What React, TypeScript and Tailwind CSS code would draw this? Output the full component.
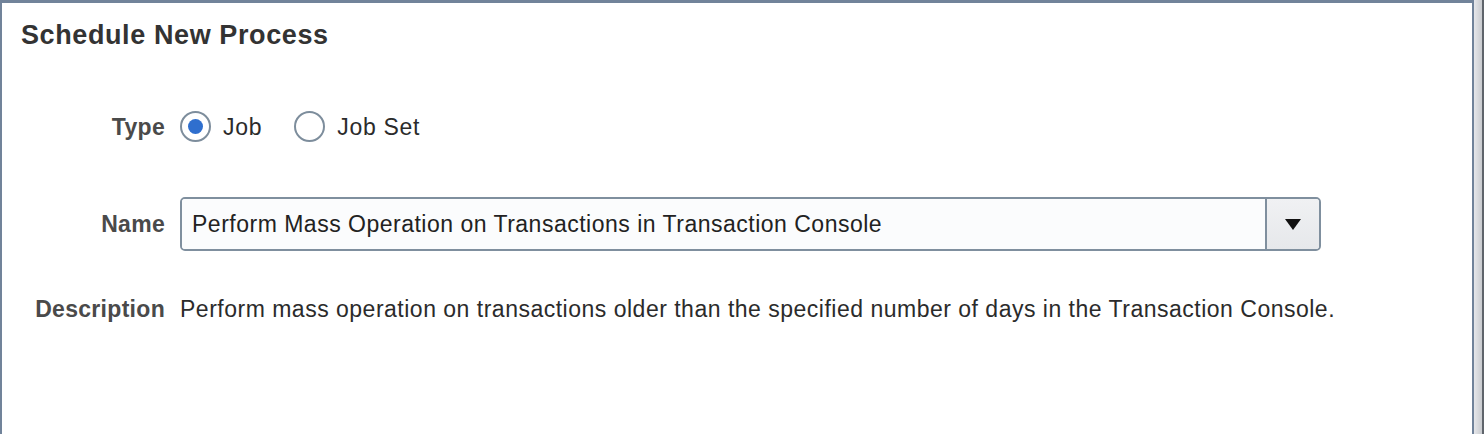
import { useState } from 'react';

const font = { fontFamily: '"Liberation Sans", Arial, sans-serif' };

function Radio({ checked, label, onClick }: { checked: boolean; label: string; onClick: () => void }) {
  return (
    <button type="button" onClick={onClick} className="flex items-center gap-[12px]">
      <span className="flex h-[31px] w-[31px] items-center justify-center rounded-full border-2 border-[#7d8d9c] bg-white">
        {checked && <span className="h-[15px] w-[15px] rounded-full bg-[#2f6fce]" />}
      </span>
      <span className="text-[23px] leading-[26px] tracking-[0.7px] text-[#2b2b2b]">{label}</span>
    </button>
  );
}

export default function App() {
  const [type, setType] = useState<'job' | 'jobset'>('job');

  return (
    <div className="flex h-[434px] w-[1484px] bg-white" style={font}>
      <div className="flex-1 border-x-2 border-t-[3px] border-[#71839a] bg-white">
        <h1 className="pl-[19px] pt-[17px] text-[27px] leading-[30px] font-bold tracking-[0.6px] text-[#333]">
          Schedule New Process
        </h1>

        <div className="mt-[61px] grid grid-cols-[163px_1fr] items-center gap-x-[15px] text-[23px] leading-[26px]">
          {/* Type */}
          <span className="text-right font-bold tracking-[0.3px] text-[#4a4a4a]">Type</span>
          <div className="flex h-[31px] items-center gap-[32px]">
            <Radio checked={type === 'job'} label="Job" onClick={() => setType('job')} />
            <Radio checked={type === 'jobset'} label="Job Set" onClick={() => setType('jobset')} />
          </div>

          {/* Name */}
          <span className="mt-[55px] text-right font-bold tracking-[0.3px] text-[#4a4a4a]">Name</span>
          <div className="mt-[55px] flex h-[54px] w-[1141px] overflow-hidden rounded-[5px] border-2 border-[#7f8f9e]">
            <input
              readOnly
              value="Perform Mass Operation on Transactions in Transaction Console"
              className="min-w-0 flex-1 bg-[#fbfcfd] px-[10px] text-[23px] tracking-[0.5px] text-[#222] outline-none"
              style={font}
            />
            <button
              type="button"
              className="flex w-[54px] items-center justify-center border-l-2 border-[#7f8f9e] bg-gradient-to-b from-[#f0f1f3] to-[#e6e8eb]"
            >
              <svg width="16" height="11" viewBox="0 0 16 11">
                <path d="M0 0h16L8 11z" fill="#111" />
              </svg>
            </button>
          </div>

          {/* Description */}
          <span className="mt-[45px] text-right font-bold tracking-[0.3px] text-[#4a4a4a]">Description</span>
          <p className="mt-[45px] tracking-[0.5px] text-[#2b2b2b]">
            Perform mass operation on transactions older than the specified number of days in the Transaction Console.
          </p>
        </div>
      </div>
      <div className="w-[8px] bg-gradient-to-r from-[#e6e7ea] to-[#c9cbcf]" />
      <div className="w-[2px] bg-[#5f646b]" />
    </div>
  );
}
